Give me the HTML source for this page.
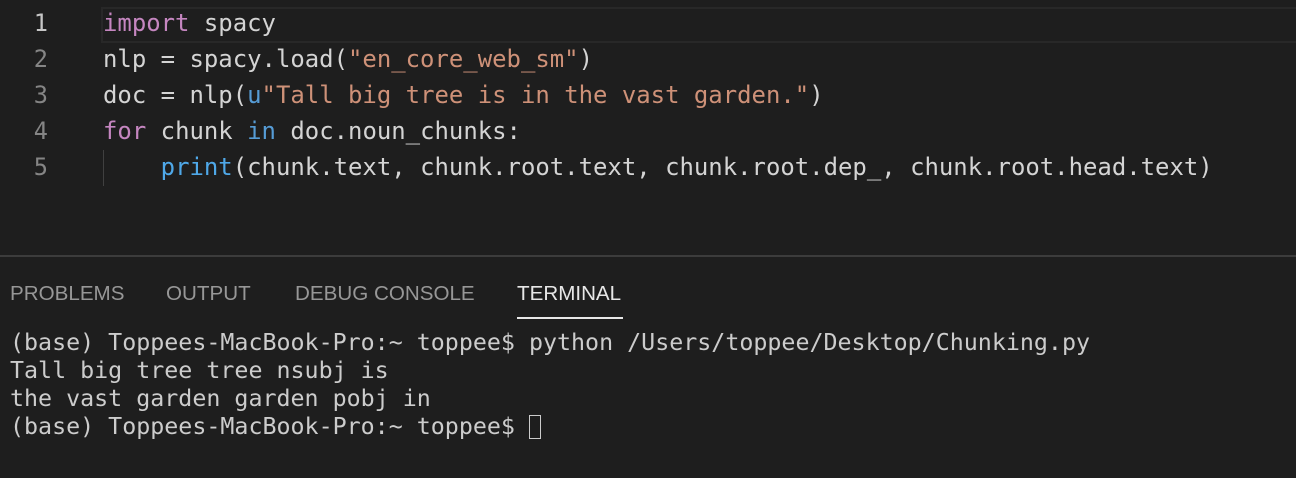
<!DOCTYPE html>
<html><head><style>
body{margin:0;width:1296px;height:478px;background:#1e1e1e;overflow:hidden;position:relative;font-family:"DejaVu Sans Mono","Liberation Mono",monospace;}
.ln{position:absolute;left:0;width:48px;text-align:right;color:#858585;font-size:23.6px;line-height:30px;}
.code{position:absolute;left:103px;color:#d4d4d4;font-size:23.95px;line-height:30px;white-space:pre;}
.k{color:#c586c0}.b{color:#569cd6}.s{color:#ce9178}.f{color:#4fa8e8}
.hl{position:absolute;left:101px;top:7px;width:1200px;height:32px;border:2px solid #282828;border-right:none;}
.guide{position:absolute;left:103px;top:150px;width:1px;height:36px;background:#404040;}
.sep{position:absolute;left:0;top:255px;width:1296px;height:2px;background:#3c3c3c;}
.tab{position:absolute;top:282px;font-family:"Liberation Sans",sans-serif;font-size:20.6px;color:#979797;}
.ul{position:absolute;left:517px;top:317px;width:106px;height:2px;background:#e7e7e7;}
.term{position:absolute;left:10px;top:329px;color:#cccccc;font-size:23.3px;line-height:28px;white-space:pre;}
.cur{display:inline-block;width:12px;height:24px;border:1.5px solid #ccc;vertical-align:-5px;box-sizing:border-box;}
</style></head><body>
<div class="hl"></div>
<div class="ln" style="top:8px;color:#c6c6c6">1</div>
<div class="ln" style="top:44px">2</div>
<div class="ln" style="top:80px">3</div>
<div class="ln" style="top:116px">4</div>
<div class="ln" style="top:152px">5</div>
<div class="code" style="top:8px"><span class="k">import</span> spacy</div>
<div class="code" style="top:44px">nlp = spacy.load(<span class="s">"en_core_web_sm"</span>)</div>
<div class="code" style="top:80px">doc = nlp(<span class="b">u</span><span class="s">"Tall big tree is in the vast garden."</span>)</div>
<div class="code" style="top:116px"><span class="k">for</span> chunk <span class="b">in</span> doc.noun_chunks:</div>
<div class="code" style="top:152px">    <span class="f">print</span>(chunk.text, chunk.root.text, chunk.root.dep_, chunk.root.head.text)</div>
<div class="guide"></div>
<div class="sep"></div>
<div class="tab" style="left:10px">PROBLEMS</div>
<div class="tab" style="left:166px">OUTPUT</div>
<div class="tab" style="left:295px">DEBUG CONSOLE</div>
<div class="tab" style="left:517px;color:#e7e7e7">TERMINAL</div>
<div class="ul"></div>
<div class="term">(base) Toppees-MacBook-Pro:~ toppee$ python /Users/toppee/Desktop/Chunking.py
Tall big tree tree nsubj is
the vast garden garden pobj in
(base) Toppees-MacBook-Pro:~ toppee$ <span class="cur"></span></div>
</body></html>
